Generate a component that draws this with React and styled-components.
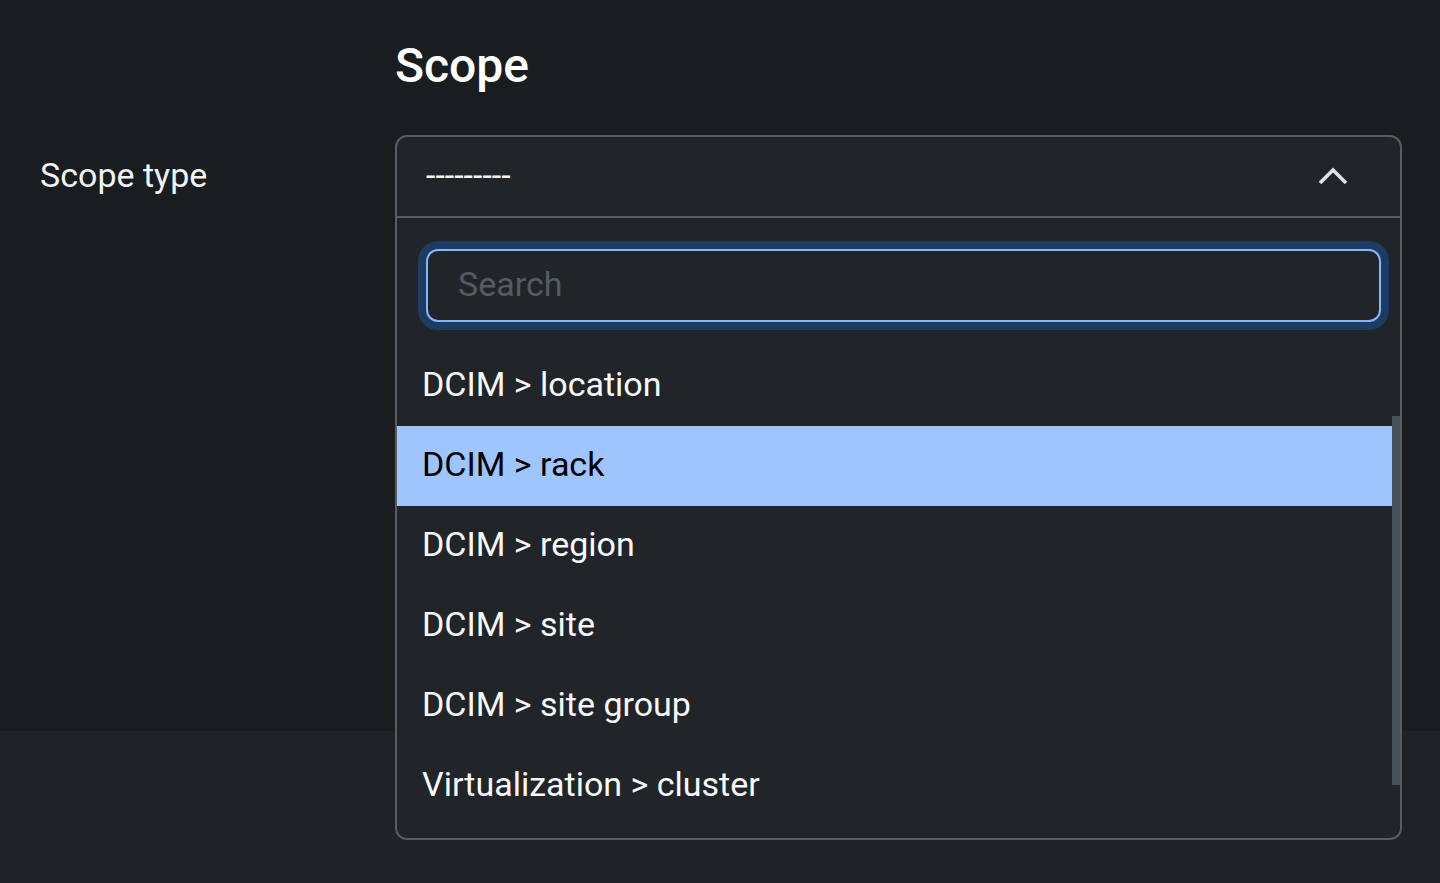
import styled, { createGlobalStyle } from 'styled-components'
import { useState } from 'react'

const GlobalStyle = createGlobalStyle`
html, body {
  margin: 0;
  padding: 0;
  background-color: #1f2226;
  font-family: Roboto, "Liberation Sans", Arial, sans-serif;
}
#root {
  min-height: 100vh;
}
`

const Page = styled.div`
display: flex;
flex-direction: column;
min-height: 100vh;
`

const Content = styled.main`
height: 731px;
background-color: #1a1d20;
padding: 37px 38px 0 40px;
box-sizing: border-box;
`

const Footer = styled.footer`
flex: 1;
background-color: #1f2226;
`

const Section = styled.section`
display: grid;
grid-template-columns: 355px 1fr;
row-gap: 40px;
`

const Heading = styled.h2`
grid-column: 2;
margin: 0;
font-size: 48px;
font-weight: 500;
line-height: 1.2;
color: #ffffff;
`

const Label = styled.label`
font-size: 34px;
line-height: 1;
color: #f1f3f5;
padding-top: 23px;
`

const Select = styled.div`
position: relative;
`

const Control = styled.div`
height: 83px;
box-sizing: border-box;
display: flex;
align-items: center;
justify-content: space-between;
padding: 0 52px 3px 29px;
background-color: #212529;
border: 2px solid #565c63;
border-radius: ${p => (p.$open ? '12px 12px 0 0' : '12px')};
font-size: 34px;
color: #f8f9fa;
cursor: pointer;
svg {
  margin-top: 2px;
}
`

const Menu = styled.div`
position: absolute;
top: 83px;
left: 0;
right: 0;
height: 622px;
box-sizing: border-box;
background-color: #212529;
border: 2px solid #565c63;
border-top: none;
border-radius: 0 0 12px 12px;
display: flex;
flex-direction: column;
overflow: hidden;
z-index: 5;
`

const SearchWrap = styled.div`
padding: 31px 19px 24px 29px;
`

const SearchInput = styled.input`
width: 100%;
height: 73px;
box-sizing: border-box;
padding: 0 30px 2px;
background-color: #212529;
border: 2px solid #86b7fe;
border-radius: 12px;
box-shadow: 0 0 0 8px #1e3b62;
outline: none;
font-family: inherit;
font-size: 34px;
color: #f8f9fa;
&::placeholder {
  color: #555b62;
}
`

const Options = styled.ul`
list-style: none;
margin: 0;
padding: 0 8px 0 0;
position: relative;
flex: 1;
`

const Option = styled.li`
height: 80px;
box-sizing: border-box;
display: flex;
align-items: center;
padding: 0 0 3px 25px;
font-size: 34px;
color: ${p => (p.$active ? '#000000' : '#f8f9fa')};
background-color: ${p => (p.$active ? '#9ec5fe' : 'transparent')};
cursor: pointer;
`

const ScrollThumb = styled.div`
position: absolute;
right: -2px;
top: 70px;
width: 10px;
height: 369px;
background-color: #495057;
`

const Chevron = () => (
  <svg width="30" height="18" viewBox="0 0 30 18" fill="none">
    <path d="M2 16 L15 3 L28 16" stroke="#dee2e6" strokeWidth="3.6" />
  </svg>
)

const options = [
  'DCIM > location',
  'DCIM > rack',
  'DCIM > region',
  'DCIM > site',
  'DCIM > site group',
  'Virtualization > cluster',
]

const App = () => {
  const [active, setActive] = useState(1)

  return (<>
    <GlobalStyle />
    <Page>
      <Content>
        <Section>
          <Heading>Scope</Heading>
          <Label>Scope type</Label>
          <Select>
            <Control $open>
              <span>---------</span>
              <Chevron />
            </Control>
            <Menu>
              <SearchWrap>
                <SearchInput placeholder="Search" />
              </SearchWrap>
              <Options>
                {options.map((o, i) => (
                  <Option key={o} $active={i === active} onMouseEnter={() => setActive(i)}>
                    {o}
                  </Option>
                ))}
                <ScrollThumb />
              </Options>
            </Menu>
          </Select>
        </Section>
      </Content>
      <Footer />
    </Page>
  </>)
}

export default App
